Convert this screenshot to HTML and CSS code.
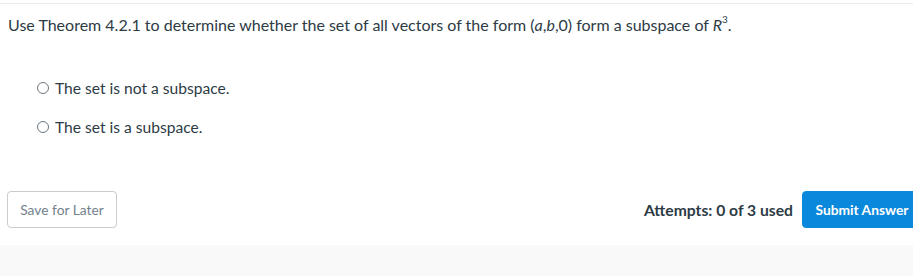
FILE: index.html
```html
<!DOCTYPE html>
<html>
<head>
<meta charset="utf-8">
<link rel="stylesheet" href="styles.css">
</head>
<body>
<div class="page">
  <div class="question">
    <p class="prompt">Use Theorem 4.2.1 to determine whether the set of all vectors of the form (<i>a</i>,<i>b</i>,0) form a subspace of <i>R</i><sup>3</sup>.</p>
    <div class="answers">
      <label class="answer"><span class="radio"></span><span>The set is not a subspace.</span></label>
      <label class="answer"><span class="radio"></span><span>The set is a subspace.</span></label>
    </div>
  </div>
  <div class="actions">
    <button class="btn save">Save for Later</button>
    <div class="right">
      <span class="attempts">Attempts: 0 of 3 used</span>
      <button class="btn submit">Submit Answer</button>
    </div>
  </div>
  <div class="footer"></div>
</div>
</body>
</html>
```
FILE: styles.css
```css
* { box-sizing: border-box; }
html, body { margin: 0; padding: 0; background: #fff; }
body { font-family: Lato, "Noto Sans", sans-serif; color: #2d3b45; width: 913px; height: 276px; overflow: hidden; }
.page { border-top: 1px solid #e8eaec; margin-top: 3px; }
.question { padding: 0 8px; }
.prompt { margin: 0; padding-top: 11px; font-size: 16px; line-height: 20px; }
.prompt sup { font-size: 10px; line-height: 0; vertical-align: 8px; }
.answers { padding: 43px 0 0 29px; display: flex; flex-direction: column; gap: 19px; }
.answer { display: flex; align-items: center; gap: 6px; font-size: 15.6px; line-height: 20px; }
.radio { width: 12px; height: 12px; border: 1px solid #6b7780; border-radius: 50%; display: inline-block; }
.actions { display: flex; justify-content: space-between; align-items: center; padding: 54px 0 0 7px; }
.right { display: flex; align-items: center; gap: 9px; }
.btn { font-family: Lato, "Noto Sans", sans-serif; font-size: 13.8px; height: 37px; border-radius: 4px; padding: 0 12px; cursor: pointer; }
.save { background: #fff; border: 1px solid #c7cdd1; color: #73818c; width: 110px; }
.attempts { font-size: 15.7px; font-weight: 700; color: #2d3b45; }
.submit { background: #0a88dc; border: 1px solid #0a88dc; color: #fff; font-weight: 700; width: 120px; margin-right: -9px; }
.footer { margin-top: 17px; height: 40px; background: #f9f9f9; }
```
